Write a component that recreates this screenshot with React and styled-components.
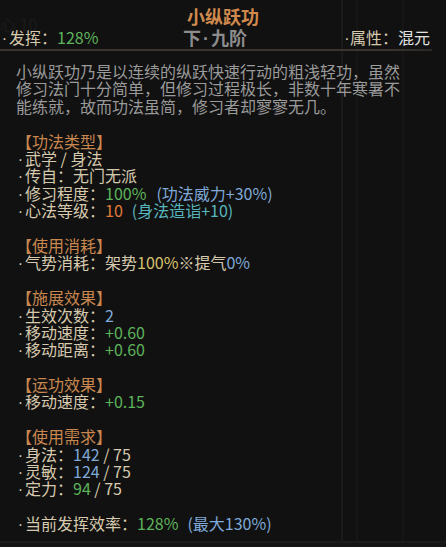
import React from "react";
import styled, { createGlobalStyle } from "styled-components";

const Global = createGlobalStyle`
  html, body { margin: 0; padding: 0; background: #111111; }
  body { font-family: "Noto Sans CJK SC", "Noto Sans", sans-serif; }
`;

const Page = styled.div`
  position: relative;
  width: 446px;
  height: 547px;
  overflow: hidden;
  background-color: #111111;
  background-image:
    linear-gradient(to bottom, transparent 541px, #1a1a1a 541px, #1a1a1a 543px, #141414 543px),
    linear-gradient(to right,
      transparent 341px, #1a1a1a 341px, #1a1a1a 343px, transparent 343px,
      transparent 356px, #161616 356px, #161616 358px, transparent 358px,
      transparent 402px, #151515 402px, #151515 404px, transparent 404px);
  font-family: "Noto Sans CJK SC", "Noto Sans", sans-serif;
  font-size: 16px;
`;

const Ghost = styled.span`
  position: absolute;
  left: 0;
  top: 14px;
  font-size: 16px;
  color: #1b1b1b;
  line-height: 20px;
`;

const Header = styled.header`
  display: flex;
  flex-direction: column;
  padding-top: 5px;
`;

const Title = styled.div`
  text-align: center;
  font-size: 18px;
  font-weight: 700;
  line-height: 22px;
  color: #d08a4d;
`;

const SubRow = styled.div`
  display: grid;
  grid-template-columns: 1fr auto 1fr;
  align-items: center;
  line-height: 20px;
  height: 20px;
  padding-right: 16px;
`;

const Grade = styled.div`
  font-size: 18px;
  font-weight: 700;
  color: #8c8c8c;
  text-align: center;
`;

const GradeDot = styled.span`
  font-family: "Liberation Sans", sans-serif;
  display: inline-block;
  width: 10px;
  line-height: 1px;
  text-align: center;
`;

const Stat = styled.div`
  justify-self: ${(p) => (p.$right ? "end" : "start")};
  color: #d6c9ad;
  white-space: nowrap;
`;

const Divider = styled.div`
  height: 2px;
  margin: 2px 14px 0 0;
  background: linear-gradient(to right, #3b3530, #3a3531 90%, #2a2725);
`;

const Body = styled.main`
  display: flex;
  flex-direction: column;
  gap: 17.4px;
  padding: 12px 16px 0 16px;
  line-height: 17.4px;
`;

const Desc = styled.p`
  margin: 0;
  color: #9a9a9a;
  width: 392px;
`;

const Section = styled.section`
  display: flex;
  flex-direction: column;
`;

const SectionTitle = styled.div`
  color: #c8874f;
  height: 17.4px;
`;

const Line = styled.div`
  color: #d6c9ad;
  white-space: nowrap;
  height: 17.4px;
`;

const Dot = styled.span`
  display: inline-block;
  width: ${(p) => (p.$narrow ? "6px" : "9px")};
  font-family: "Liberation Sans", sans-serif;
  line-height: 1px;
  text-align: center;
`;

const V = styled.span`
  color: ${(p) =>
    ({
      green: "#5db35a",
      blue: "#7fa9d8",
      orange: "#e07a36",
      teal: "#58b6bf",
      yellow: "#d7bf6c",
      white: "#e2e2e2",
    }[p.$c] || "#d6c9ad")};
`;

const Gap = styled.span`
  display: inline-block;
  width: ${(p) => p.$w || 7}px;
`;

const Item = ({ children }) => (
  <Line>
    <Dot>·</Dot>
    {children}
  </Line>
);

export default function App() {
  return (
    <>
      <Global />
      <Page>
        <Ghost>心 10</Ghost>
        <Header>
          <Title>小纵跃功</Title>
          <SubRow>
            <Stat>
              <Dot>·</Dot>发挥：<V $c="green">128%</V>
            </Stat>
            <Grade>
              下<GradeDot>·</GradeDot>九阶
            </Grade>
            <Stat $right>
              <Dot $narrow>·</Dot>属性：<V $c="white">混元</V>
            </Stat>
          </SubRow>
          <Divider />
        </Header>
        <Body>
          <Desc>
            小纵跃功乃是以连续的纵跃快速行动的粗浅轻功，虽然修习法门十分简单，但修习过程极长，非数十年寒暑不能练就，故而功法虽简，修习者却寥寥无几。
          </Desc>
          <Section>
            <SectionTitle>【功法类型】</SectionTitle>
            <Item>武学 / 身法</Item>
            <Item>传自：无门无派</Item>
            <Item>
              修习程度：<V $c="green">100%</V>
              <Gap $w={10} />
              <V $c="blue">(功法威力+30%)</V>
            </Item>
            <Item>
              心法等级：<V $c="orange">10</V>
              <Gap $w={9} />
              <V $c="teal">(身法造诣+10)</V>
            </Item>
          </Section>
          <Section>
            <SectionTitle>【使用消耗】</SectionTitle>
            <Item>
              气势消耗：架势<V $c="yellow">100%</V>※提气<V $c="blue">0%</V>
            </Item>
          </Section>
          <Section>
            <SectionTitle>【施展效果】</SectionTitle>
            <Item>
              生效次数：<V $c="blue">2</V>
            </Item>
            <Item>
              移动速度：<V $c="green">+0.60</V>
            </Item>
            <Item>
              移动距离：<V $c="green">+0.60</V>
            </Item>
          </Section>
          <Section>
            <SectionTitle>【运功效果】</SectionTitle>
            <Item>
              移动速度：<V $c="green">+0.15</V>
            </Item>
          </Section>
          <Section>
            <SectionTitle>【使用需求】</SectionTitle>
            <Item>
              身法：<V $c="blue">142</V> / 75
            </Item>
            <Item>
              灵敏：<V $c="blue">124</V> / 75
            </Item>
            <Item>
              定力：<V $c="green">94</V> / 75
            </Item>
          </Section>
          <Section>
            <Item>
              当前发挥效率：<V $c="green">128%</V>
              <Gap $w={9} />
              <V $c="blue">(最大130%)</V>
            </Item>
          </Section>
        </Body>
      </Page>
    </>
  );
}
